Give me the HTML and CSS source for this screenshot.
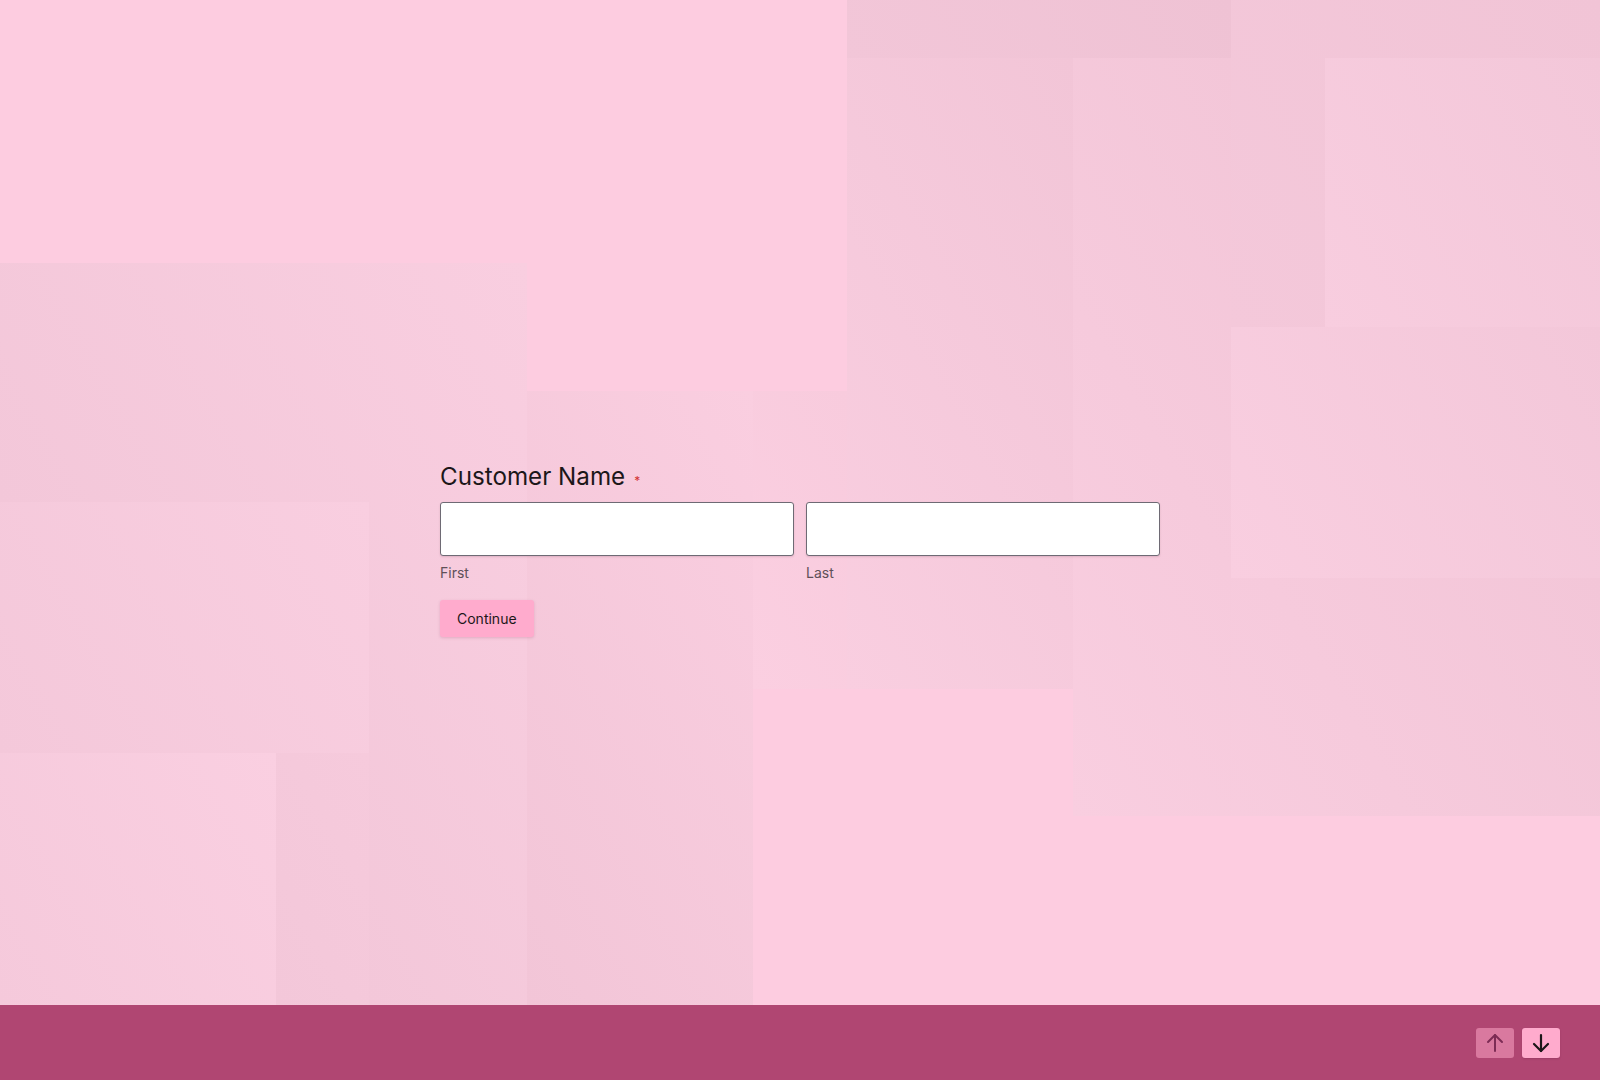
FILE: index.html
```html
<!DOCTYPE html>
<html lang="en">
<head>
<meta charset="utf-8">
<title>Customer Name</title>
<link rel="stylesheet" href="styles.css">
</head>
<body>
<div class="page">
  <main class="stage">
    <form class="question" onsubmit="return false">
      <h1 class="question-title">Customer Name<span class="required">*</span></h1>
      <div class="name-row">
        <div class="name-field">
          <input class="text-input" type="text" aria-label="First">
          <div class="sub-label">First</div>
        </div>
        <div class="name-field">
          <input class="text-input" type="text" aria-label="Last">
          <div class="sub-label">Last</div>
        </div>
      </div>
      <button class="continue-btn" type="button">Continue</button>
    </form>
  </main>
  <footer class="footer">
    <button class="nav-btn nav-btn-disabled" type="button" aria-label="Previous">
      <svg width="24" height="24" viewBox="0 0 24 24" fill="none" stroke="currentColor" stroke-width="2" stroke-linecap="round" stroke-linejoin="round"><path d="M12 20V4"/><path d="M5 11l7-7 7 7"/></svg>
    </button>
    <button class="nav-btn" type="button" aria-label="Next">
      <svg width="24" height="24" viewBox="0 0 24 24" fill="none" stroke="currentColor" stroke-width="2.2" stroke-linecap="round" stroke-linejoin="round"><path d="M12 4v16"/><path d="M5 13l7 7 7-7"/></svg>
    </button>
  </footer>
</div>
</body>
</html>
```

FILE: styles.css
```css
* { box-sizing: border-box; }

html, body {
  margin: 0;
  padding: 0;
}

body {
  font-family: Inter, "Noto Sans", "Liberation Sans", sans-serif;
  color: #1c1719;
  background: #fdcce0;
}

.page {
  width: 1600px;
  height: 1080px;
  display: flex;
  flex-direction: column;
  overflow: hidden;
}

.stage {
  flex: 1;
  padding-top: 463px;
  background:
    linear-gradient(60deg, #f8cddf, #f3c7d9) 1325px 58px / 275px 269px no-repeat,
    linear-gradient(60deg, #f2c6d8, #efc2d4) 847px 0 / 384px 58px no-repeat,
    linear-gradient(60deg, #f4c8da, #f1c4d6) 1231px 0 / 369px 327px no-repeat,
    linear-gradient(60deg, #f9cee0, #f2c5d7) 847px 58px / 226px 631px no-repeat,
    linear-gradient(60deg, #f9cee0, #f3c6d8) 1073px 58px / 158px 758px no-repeat,
    linear-gradient(60deg, #f9cee0, #f3c7d9) 1231px 327px / 369px 251px no-repeat,
    linear-gradient(60deg, #f9cee0, #f3c6d8) 1073px 578px / 527px 238px no-repeat,
    linear-gradient(60deg, #fbcfe1, #f8cbdd) 753px 391px / 94px 298px no-repeat,
    linear-gradient(60deg, #f3c7d9, #f9cee0) 0 263px / 527px 239px no-repeat,
    linear-gradient(60deg, #f4c8da, #f9cee0) 0 502px / 369px 251px no-repeat,
    linear-gradient(60deg, #f5c9db, #facfe1) 0 753px / 276px 252px no-repeat,
    linear-gradient(60deg, #f3c7d9, #f6cadc) 276px 753px / 93px 252px no-repeat,
    linear-gradient(60deg, #f3c7d9, #f8cddf) 369px 502px / 158px 503px no-repeat,
    linear-gradient(60deg, #f2c5d7, #facee0) 527px 391px / 226px 614px no-repeat,
    #fdcce0;
}

.question {
  width: 720px;
  margin: 0 auto;
  display: flex;
  flex-direction: column;
  align-items: flex-start;
}

.question-title {
  margin: 0 0 11px;
  font-size: 24.2px;
  line-height: 28px;
  height: 28px;
  font-weight: 400;
  color: #1c1719;
}

.required {
  color: #d2302f;
  font-size: 12px;
  line-height: 1;
  margin-left: 9px;
  vertical-align: baseline;
}

.name-row {
  width: 100%;
  display: grid;
  grid-template-columns: 1fr 1fr;
  column-gap: 12px;
}

.name-field {
  display: flex;
  flex-direction: column;
}

.text-input {
  width: 100%;
  height: 54px;
  margin: 0;
  background: #ffffff;
  border: 1px solid #6e6a74;
  border-radius: 3px;
  box-shadow: 0 1px 2px rgba(80, 30, 50, 0.15);
  font: inherit;
  font-size: 16px;
  padding: 0 12px;
  outline: none;
}

.sub-label {
  margin-top: 7px;
  font-size: 14px;
  line-height: 20px;
  color: #5f5058;
}

.continue-btn {
  margin-top: 17px;
  height: 37px;
  padding: 0 17px;
  border: 0;
  border-radius: 3px;
  background: #ffabcd;
  color: #1c1719;
  font-family: inherit;
  font-size: 14px;
  line-height: 20px;
  box-shadow: 0 1px 3px rgba(150, 60, 100, 0.22);
  cursor: pointer;
}

.footer {
  height: 75px;
  flex: none;
  background: #b04672;
  display: flex;
  justify-content: flex-end;
  align-items: center;
  gap: 8px;
  padding: 0 40px 0 0;
}

.nav-btn {
  width: 38px;
  height: 30px;
  padding: 0;
  border: 0;
  border-radius: 3px;
  background: #ffabcd;
  color: #1c1719;
  display: flex;
  align-items: center;
  justify-content: center;
  box-shadow: 0 1px 2px rgba(80, 20, 50, 0.2);
  cursor: pointer;
}

.nav-btn-disabled {
  background: #d9799f;
  color: #7d2c55;
  box-shadow: none;
}
```
